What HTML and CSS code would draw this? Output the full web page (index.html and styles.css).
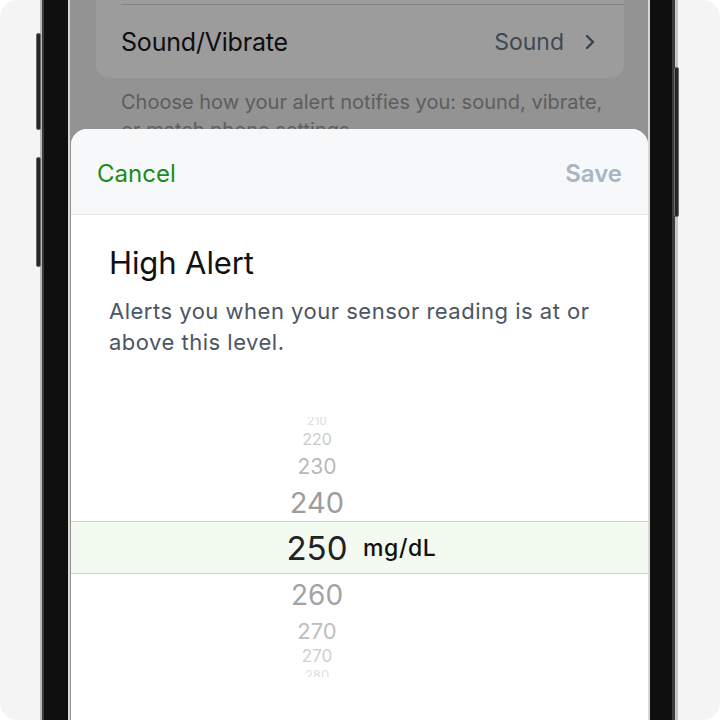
FILE: index.html
```html
<!DOCTYPE html>
<html lang="en">
<head>
<meta charset="utf-8">
<title>High Alert</title>
<link rel="stylesheet" href="styles.css">
</head>
<body>
<div class="frame">
  <div class="phone">
    <span class="btn btn-l1"></span>
    <span class="btn btn-l2"></span>
    <span class="btn btn-r"></span>
    <div class="screen">
      <div class="bg-content">
        <div class="card">
          <div class="row row-prev"></div>
          <div class="row">
            <span class="row-label">Sound/Vibrate</span>
            <span class="row-value">Sound
              <svg class="chev" width="12" height="16" viewBox="0 0 12 16"><path d="M3 2 L9 8 L3 14" fill="none" stroke="#38424f" stroke-width="2.4" stroke-linecap="round" stroke-linejoin="round"/></svg>
            </span>
          </div>
        </div>
        <p class="footnote">Choose how your alert notifies you: sound, vibrate, or match phone settings.</p>
      </div>
      <div class="sheet">
        <div class="sheet-head">
          <span class="cancel">Cancel</span>
          <span class="save">Save</span>
        </div>
        <div class="sheet-body">
          <h1 class="title">High Alert</h1>
          <p class="desc">Alerts you when your sensor reading is at or above this level.</p>
          <div class="picker">
            <div class="pk pk-a4"><span class="num">210</span></div>
            <div class="pk pk-a3"><span class="num">220</span></div>
            <div class="pk pk-a2"><span class="num">230</span></div>
            <div class="pk pk-a1"><span class="num">240</span></div>
            <div class="pk pk-sel"><span class="num">250</span><span class="unit">mg/dL</span></div>
            <div class="pk pk-b1"><span class="num">260</span></div>
            <div class="pk pk-b2"><span class="num">270</span></div>
            <div class="pk pk-b3"><span class="num">270</span></div>
            <div class="pk pk-b4"><span class="num">280</span></div>
          </div>
        </div>
      </div>
    </div>
  </div>
</div>
</body>
</html>
```

FILE: styles.css
```css
* { box-sizing: border-box; }
html, body { margin: 0; padding: 0; background: #ffffff; }
body { font-family: Inter, "Noto Sans", sans-serif; }

.frame {
  width: 720px;
  height: 720px;
  background: #f4f4f4;
  border-radius: 18px;
  overflow: hidden;
  display: flex;
}

.phone {
  position: relative;
  margin-left: 40px;
  width: 635px;
  height: 720px;
  background: #0f0f0f;
  border-left: 2px solid #b9b9b9;
  border-right: 3px solid #3c3c3c;
  box-shadow: 3px 0 0 #c6c6c6, inset 2px 0 0 #3a3a3a;
  padding: 0 22px 0 26px;
}

.btn {
  position: absolute;
  background: #262626;
  border: 1px solid #6a6a6a;
  border-radius: 2px;
}
.btn-l1 { left: -6px; top: 33px; width: 5px; height: 97px; }
.btn-l2 { left: -6px; top: 157px; width: 5px; height: 110px; }
.btn-r { right: -7px; top: 67px; width: 5px; height: 150px; }

.screen {
  position: relative;
  width: 582px;
  height: 720px;
  background: #939393;
  border-left: 2px solid #d6d6d6;
  border-right: 2px solid #d6d6d6;
  overflow: hidden;
}

.bg-content {
  padding: 0 24px 0 26px;
}

.card {
  margin-top: -20px;
  background: #9c9c9c;
  border-radius: 14px;
  padding-left: 25px;
}
.row {
  height: 73px;
  display: flex;
  align-items: center;
  justify-content: space-between;
  padding-right: 28px;
}
.row-prev {
  height: 25px;
  border-bottom: 1px solid #858585;
}
.row-label {
  font-size: 25px;
  color: #0e0e0e;
  letter-spacing: -0.2px;
}
.row-value {
  font-size: 23px;
  color: #414953;
  display: flex;
  align-items: center;
  gap: 20px;
}
.chev { display: block; }

.footnote {
  margin: 10px 0 0 25px;
  font-size: 20px;
  line-height: 28px;
  color: #5d5d5d;
  width: 490px;
}

.sheet {
  position: absolute;
  left: 1px;
  right: 0;
  top: 129px;
  bottom: 0;
  background: #ffffff;
  border-radius: 16px 16px 0 0;
  overflow: hidden;
}
.sheet-head {
  height: 86px;
  background: #f7f8fa;
  border-bottom: 1px solid #e6e8ec;
  display: flex;
  align-items: center;
  justify-content: space-between;
  padding: 3px 26px 0 26px;
}
.cancel {
  font-size: 24px;
  color: #1d8a1b;
}
.save {
  font-size: 24px;
  font-weight: 600;
  color: #a9b5c2;
}

.sheet-body {
  padding: 30px 0 0 0;
}
.title {
  margin: 0 0 0 38px;
  font-size: 31px;
  line-height: 36px;
  font-weight: 400;
  color: #111111;
  letter-spacing: -0.1px;
}
.desc {
  margin: 15px 0 0 38px;
  width: 500px;
  font-size: 22px;
  line-height: 31px;
  color: #4b5563;
  letter-spacing: 0.5px;
}

.picker {
  margin-top: 59px;
  height: 260px;
  overflow: hidden;
  display: flex;
  flex-direction: column;
}
.pk {
  display: flex;
  align-items: center;
  padding-left: 200px;
  flex: none;
}
.num {
  width: 92px;
  text-align: center;
  color: #9e9e9e;
}
.pk-a4 { height: 18px; margin-top: -6px; font-size: 12px; }
.pk-a4 .num { color: #dddddd; }
.pk-a3 { height: 20px; font-size: 16px; }
.pk-a3 .num { color: #cbcbcb; }
.pk-a2 { height: 34px; font-size: 21px; }
.pk-a2 .num { color: #b9b9b9; }
.pk-a1 { height: 38px; font-size: 29px; }
.pk-a1 .num { color: #9d9d9d; }
.pk-sel {
  height: 53px;
  background: #f3faf0;
  border-top: 1px solid #cfd3cf;
  border-bottom: 1px solid #cfd3cf;
  font-size: 33px;
}
.pk-sel .num { color: #222222; }
.unit {
  font-size: 23px;
  font-weight: 500;
  color: #111111;
  letter-spacing: 0.6px;
}
.pk-b1 { height: 42px; font-size: 28px; }
.pk-b1 .num { color: #a3a3a3; }
.pk-b2 { height: 30px; font-size: 22px; }
.pk-b2 .num { color: #bdbdbd; }
.pk-b3 { height: 20px; font-size: 17px; }
.pk-b3 .num { color: #d0d0d0; }
.pk-b4 { height: 18px; font-size: 13px; }
.pk-b4 .num { color: #dedede; }
```
